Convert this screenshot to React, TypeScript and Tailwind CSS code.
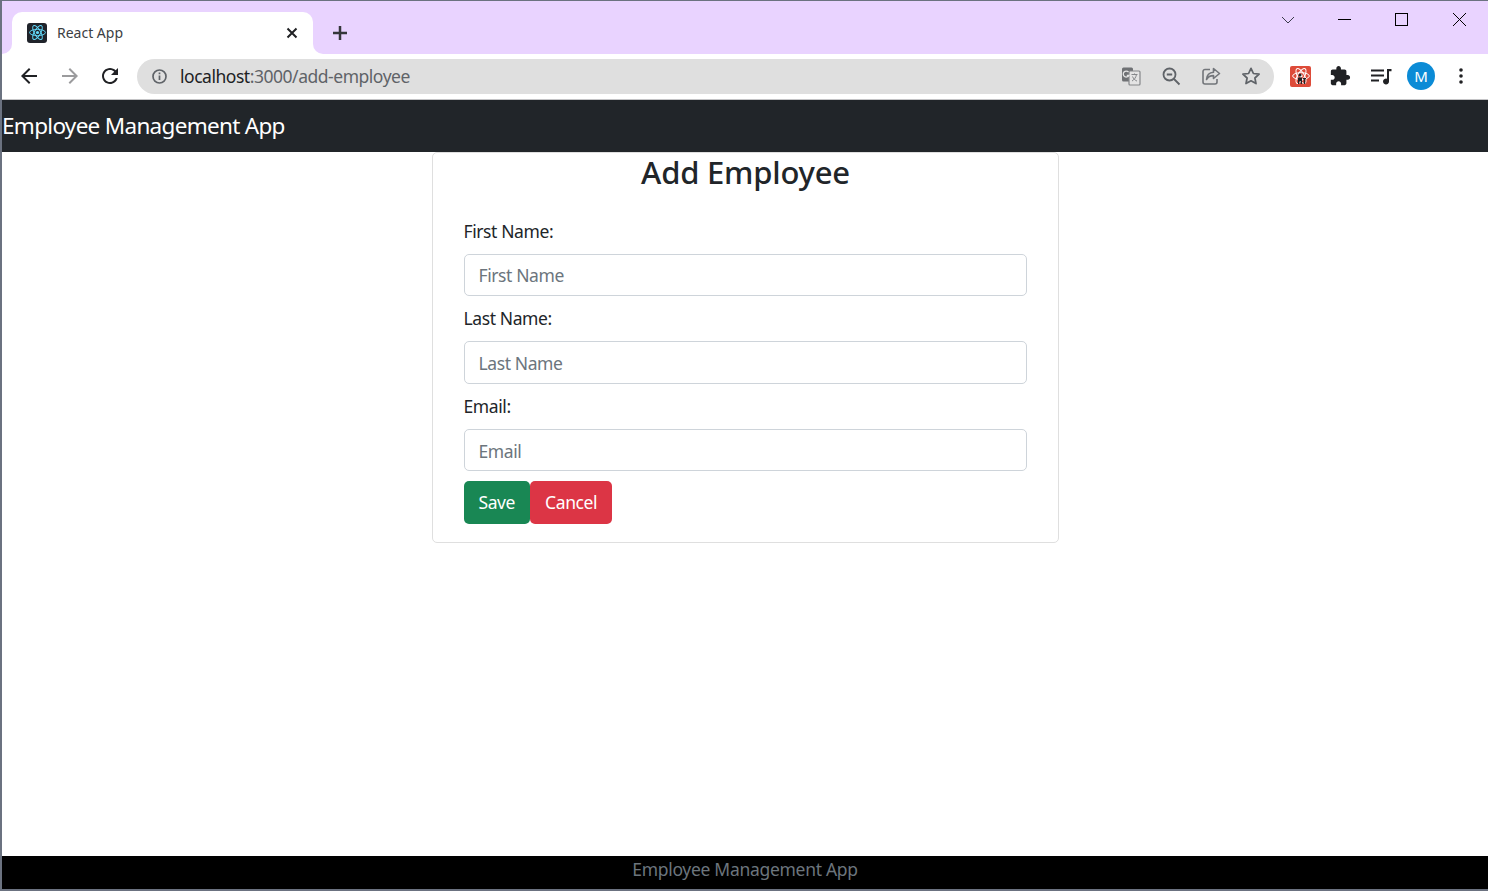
import React from 'react';

const ReactLogo = ({ color = '#61dafb', size = 20 }: { color?: string; size?: number }) => (
  <svg width={size} height={size} viewBox="0 0 24 24" fill="none" stroke={color} strokeWidth="1.2">
    <ellipse cx="12" cy="12" rx="10" ry="4" />
    <ellipse cx="12" cy="12" rx="10" ry="4" transform="rotate(60 12 12)" />
    <ellipse cx="12" cy="12" rx="10" ry="4" transform="rotate(120 12 12)" />
    <circle cx="12" cy="12" r="2" fill={color} stroke="none" />
  </svg>
);

const Tab = () => (
  <div className="relative flex h-[42px] w-[301px] items-center rounded-t-[10px] bg-white pb-[1px] pl-[15px] pr-[14px]">
    {/* the flared bottom corners of a chrome tab */}
    <div className="absolute bottom-0 left-[-10px] h-[10px] w-[10px] bg-white">
      <div className="h-full w-full rounded-br-[10px] bg-[#e9d3ff]" />
    </div>
    <div className="absolute bottom-0 right-[-10px] h-[10px] w-[10px] bg-white">
      <div className="h-full w-full rounded-bl-[10px] bg-[#e9d3ff]" />
    </div>
    <div className="flex h-5 w-5 items-center justify-center rounded-[3px] bg-[#20232a]">
      <ReactLogo size={19} />
    </div>
    <span className="ml-[10px] flex-1 text-[14px] text-[#3c4043]">React App</span>
    <svg width="14" height="14" viewBox="0 0 14 14" stroke="#202124" strokeWidth="2">
      <path d="M2.5 2.500l9 9M11.500 2.500l-9 9" />
    </svg>
  </div>
);

const TitleBar = () => (
  <div className="flex h-[53px] items-end bg-[#e9d3ff] pl-[10px]">
    <Tab />
    <div className="mb-[13px] ml-[19px] flex h-4 w-4 items-center justify-center">
      <svg width="16" height="16" viewBox="0 0 16 16" stroke="#35363a" strokeWidth="2.500">
        <path d="M8 1v14M1 8h14" />
      </svg>
    </div>
    <div className="ml-auto flex h-full items-start">
      <svg className="mr-[43px] mt-[14px]" width="14" height="10" viewBox="0 0 14 10" fill="none" stroke="#3c3c4c" strokeWidth="1">
        <path d="M1 2l6 6 6-6" />
      </svg>
      <div className="mr-[44px] mt-[18px] h-px w-[13px] bg-black" />
      <div className="mr-[45px] mt-[12px] h-[13px] w-[13px] border border-black" />
      <svg className="mr-[22px] mt-[12px]" width="13" height="13" viewBox="0 0 13 13" stroke="#000" strokeWidth="1">
        <path d="M0 0l13 13M13 0L0 13" />
      </svg>
    </div>
  </div>
);

const NavIcon = ({ d, color, size = 24 }: { d: string; color: string; size?: number }) => (
  <svg width={size} height={size} viewBox="0 0 24 24" fill={color}>
    <path d={d} />
  </svg>
);

const AddressIcons = () => (
  <div className="flex items-center gap-[20px]">
    <svg width="20" height="20" viewBox="0 0 20 20">
      <rect x="1" y="1.500" width="11" height="14" rx="1.500" fill="#6f7174" />
      <rect x="8" y="5" width="11" height="14" rx="1" fill="#e4e4e4" stroke="#85878a" strokeWidth="1.200" />
      <path d="M10.500 8.500h6M13.500 7.500v1M15.500 8.500c-.5 3-2.500 5.500-4.500 6.500M11.500 10.500c.8 2 2.500 3.800 4.500 4.600" fill="none" stroke="#85878a" strokeWidth="1" />
      <path d="M7.500 6a3 3 0 1 0 .4 3.500H5.800" fill="none" stroke="#e4e4e4" strokeWidth="1.300" />
    </svg>
    <svg width="20" height="20" viewBox="0 0 20 20" fill="none" stroke="#5f6368" strokeWidth="1.800">
      <circle cx="8.500" cy="8.500" r="6" />
      <path d="M13 13l5.500 5.500M5.800 8.500h5.400" />
    </svg>
    <svg width="20" height="20" viewBox="0 0 20 20" fill="none" stroke="#72757a" strokeWidth="1.600" strokeLinejoin="round">
      <path d="M9 3.500H4a2 2 0 0 0-2 2V16a2 2 0 0 0 2 2h10a2 2 0 0 0 2-2v-3" />
      <path d="M12.500 2.500l6 5-6 5V9.600c-3.500 0-5.500 1.200-7 3.900.3-4.200 2.700-7 7-7.300z" />
    </svg>
    <svg width="20" height="20" viewBox="0 0 24 24" fill="none" stroke="#5f6368" strokeWidth="2.100" strokeLinejoin="round">
      <path d="M12 2.800l2.900 6.200 6.800.8-5 4.600 1.300 6.700-6-3.300-6 3.300 1.300-6.700-5-4.600 6.800-.8z" />
    </svg>
  </div>
);

const Toolbar = () => (
  <div className="flex h-[46px] items-center border-b border-[#c4c4c6] bg-white pb-[1px]">
    <div className="ml-[15px] flex w-[120px] items-center gap-[16.5px]">
      <NavIcon color="#202124" d="M20 11H7.830l5.590-5.590L12 4l-8 8 8 8 1.410-1.410L7.830 13H20v-2z" />
      <NavIcon color="#9b9b9d" d="M12 4l-1.410 1.410L16.170 11H4v2h12.170l-5.580 5.590L12 20l8-8z" />
      <NavIcon color="#202124" d="M17.650 6.350C16.200 4.900 14.210 4 12 4c-4.420 0-7.990 3.580-7.990 8s3.570 8 7.990 8c3.730 0 6.840-2.550 7.730-6h-2.080c-.82 2.330-3.040 4-5.650 4-3.310 0-6-2.690-6-6s2.690-6 6-6c1.660 0 3.140.69 4.220 1.780L13 11h7V4l-2.350 2.350z" />
    </div>
    <div className="flex h-[35px] w-[1137px] items-center rounded-full bg-[#dfdfdf] pl-[14px] pr-[13px]">
      <svg width="17" height="17" viewBox="0 0 17 17" fill="none" stroke="#5f6368" strokeWidth="1.700">
        <circle cx="8.500" cy="8.500" r="6.500" />
        <path d="M8.500 7.500v4.500M8.500 4.500v1.700" />
      </svg>
      <div className="ml-[12px] flex-1 pt-[1px] text-[17.5px] leading-none tracking-[-0.47px]">
        <span className="text-[#202124]">localhost</span>
        <span className="text-[#5f6368]">:3000/add-employee</span>
      </div>
      <AddressIcons />
    </div>
    <div className="ml-[16px] flex items-center">
      <div className="relative flex h-[21px] w-[21px] items-center justify-center rounded-[2px] bg-[#dd4b39]">
        <ReactLogo color="#fff" size={20} />
        <svg className="absolute left-[7px] top-[7px]" width="10" height="11" viewBox="0 0 10 11" fill="#202124">
          <circle cx="3" cy="2" r="1.500" />
          <path d="M1 4.500h4V11H3.700V8H2.300v3H1zM6 5h3v1.200H8.200V11H6.800V6.200H6z" />
        </svg>
      </div>
      <div className="ml-[17px] flex h-[24px] w-[24px] items-center justify-center">
        <NavIcon size={22} color="#202124" d="M20.500 11H19V7c0-1.100-.9-2-2-2h-4V3.500C13 2.120 11.880 1 10.500 1S8 2.120 8 3.500V5H4c-1.100 0-1.990.9-1.990 2v3.800H3.500c1.490 0 2.700 1.210 2.700 2.700s-1.210 2.700-2.700 2.700H2V20c0 1.100.9 2 2 2h3.800v-1.500c0-1.490 1.210-2.700 2.700-2.700 1.490 0 2.700 1.210 2.700 2.700V22H17c1.100 0 2-.9 2-2v-4h1.500c1.380 0 2.500-1.120 2.500-2.500S21.880 11 20.500 11z" />
      </div>
      <svg className="ml-[18px]" width="22" height="20" viewBox="0 0 22 20" fill="#202124">
        <path d="M1 3.500h13v2H1zM1 8.500h13v2H1zM1 13.500h8v2H1z" />
        <path d="M17 3h4.500v2.200H19V15.500a3 3 0 1 1-2-2.800z" />
      </svg>
      <div className="ml-[15px] flex h-[28px] w-[28px] items-center justify-center rounded-full bg-[#0b8bd6] text-[15px] text-white">M</div>
      <svg className="ml-[16px]" width="20" height="20" viewBox="0 0 20 20" fill="#202124">
        <circle cx="10" cy="4" r="1.800" />
        <circle cx="10" cy="10" r="1.800" />
        <circle cx="10" cy="16" r="1.800" />
      </svg>
    </div>
  </div>
);

const Field = ({ label }: { label: string }) => (
  <div className="mb-[4px]">
    <label className="block h-[41px] text-[17.5px] leading-[37px] tracking-[-0.4px] text-[#212529]">{label}:</label>
    <input
      readOnly
      placeholder={label}
      className="block h-[42.6px] w-full rounded-[5px] border border-[#ced4da] bg-white px-[14px] pt-[1px] text-[17.5px] tracking-[-0.4px] text-[#212529] outline-none placeholder:text-[#6c757d]"
    />
  </div>
);

export default function App() {
  return (
    <div
      className="flex h-[891px] flex-col overflow-hidden border-b-2 border-l-2 border-t border-[#6b7280] bg-white"
      style={{ fontFamily: '"Noto Sans", "Open Sans", sans-serif' }}
    >
      <TitleBar />
      <Toolbar />
      <nav className="flex h-[52px] items-center bg-[#212529] text-[22.5px] tracking-[-0.7px] text-white">
        Employee Management App
      </nav>
      <main className="flex flex-1 justify-center">
        <div className="h-[391px] w-[627px] rounded-[5px] border border-[#dfdfdf] px-[31px]">
          <h2 className="h-[59.7px] pl-[1px] text-center text-[31px] font-medium leading-[38px] tracking-[-0.2px] text-[#212529]">Add Employee</h2>
          <Field label="First Name" />
          <Field label="Last Name" />
          <Field label="Email" />
          <div className="mt-[9.5px] flex">
            <button className="h-[43px] rounded-[5px] bg-[#198754] px-[15px] text-[17.5px] tracking-[-0.4px] text-white">Save</button>
            <button className="h-[43px] rounded-[5px] bg-[#dc3545] px-[15px] text-[17.5px] tracking-[-0.4px] text-white">Cancel</button>
          </div>
        </div>
      </main>
      <footer className="flex h-[33px] items-center justify-center bg-black pb-[6px] text-[17.5px] tracking-[-0.3px] text-[#6c757d]">
        Employee Management App
      </footer>
    </div>
  );
}
